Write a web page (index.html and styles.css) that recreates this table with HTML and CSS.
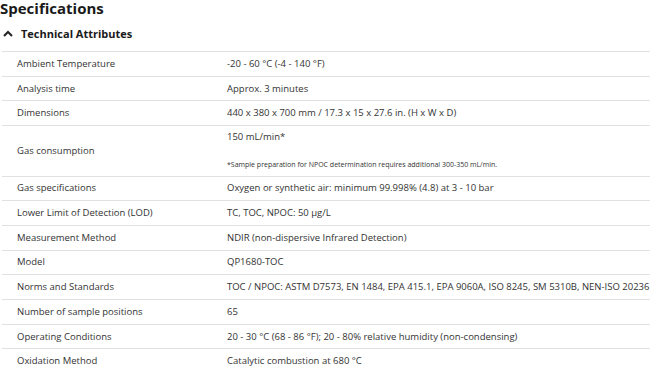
FILE: index.html
```html
<!DOCTYPE html>
<html lang="en">
<head>
<meta charset="utf-8">
<title>Specifications</title>
<link rel="stylesheet" href="styles.css">
</head>
<body>
<h2 class="title">Specifications</h2>
<div class="section-head">
  <svg class="chevron" width="10" height="7" viewBox="0 0 10 7"><path d="M1 6 L5 2 L9 6" fill="none" stroke="#222" stroke-width="2"/></svg>
  <span>Technical Attributes</span>
</div>
<div class="specs">
  <div class="row"><div class="label">Ambient Temperature</div><div class="value">-20 - 60 °C (-4 - 140 °F)</div></div>
  <div class="row"><div class="label">Analysis time</div><div class="value">Approx. 3 minutes</div></div>
  <div class="row"><div class="label">Dimensions</div><div class="value">440 x 380 x 700 mm / 17.3 x 15 x 27.6 in. (H x W x D)</div></div>
  <div class="row tall"><div class="label">Gas consumption</div><div class="value top"><p class="main">150 mL/min*</p><p class="note">*Sample preparation for NPOC determination requires additional 300-350 mL/min.</p></div></div>
  <div class="row"><div class="label">Gas specifications</div><div class="value">Oxygen or synthetic air: minimum 99.998% (4.8) at 3 - 10 bar</div></div>
  <div class="row"><div class="label">Lower Limit of Detection (LOD)</div><div class="value">TC, TOC, NPOC: 50 µg/L</div></div>
  <div class="row"><div class="label">Measurement Method</div><div class="value">NDIR (non-dispersive Infrared Detection)</div></div>
  <div class="row"><div class="label">Model</div><div class="value">QP1680-TOC</div></div>
  <div class="row"><div class="label">Norms and Standards</div><div class="value">TOC / NPOC: ASTM D7573, EN 1484, EPA 415.1, EPA 9060A, ISO 8245, SM 5310B, NEN-ISO 20236</div></div>
  <div class="row"><div class="label">Number of sample positions</div><div class="value">65</div></div>
  <div class="row"><div class="label">Operating Conditions</div><div class="value">20 - 30 °C (68 - 86 °F); 20 - 80% relative humidity (non-condensing)</div></div>
  <div class="row"><div class="label">Oxidation Method</div><div class="value">Catalytic combustion at 680 °C</div></div>
</div>
</body>
</html>
```
FILE: styles.css
```css
html, body {
  margin: 0;
  padding: 0;
  background: #fff;
  overflow: hidden;
}
body {
  font-family: "Open Sans", "Noto Sans", sans-serif;
  color: #222;
  width: 650px;
}
.title {
  margin: -1px 0 0 0;
  font-size: 15px;
  line-height: 18px;
  font-weight: 700;
  color: #1a1a1a;
}
.section-head {
  display: flex;
  align-items: center;
  gap: 8px;
  margin: 9px 0 0 3px;
  height: 14px;
  font-size: 11px;
  font-weight: 700;
  color: #1a1a1a;
}
.chevron {
  display: block;
}
.specs {
  margin: 11px 0 0 2px;
  width: 648px;
  font-size: 9.5px;
  line-height: 14px;
  color: #333;
}
.row {
  display: grid;
  grid-template-columns: 225px 1fr;
  align-items: center;
  height: 24.7px;
  box-sizing: border-box;
  border-top: 1px solid #e0e0e0;
}
.row.tall {
  height: 50.5px;
}
.label {
  padding-left: 15px;
}
.value {
  white-space: nowrap;
}
.value.top {
  align-self: start;
  padding-top: 4px;
}
.main {
  margin: 0;
}
.note {
  margin: 16px 0 0;
  font-size: 7px;
  line-height: 10px;
}
```
